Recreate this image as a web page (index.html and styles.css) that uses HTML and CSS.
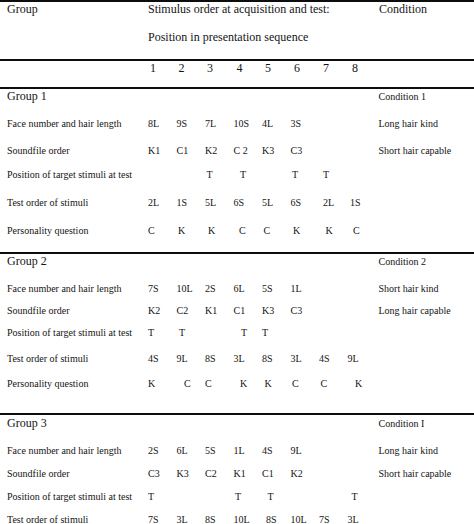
FILE: index.html
```html
<!DOCTYPE html>
<html lang="en">
<head>
<meta charset="utf-8">
<title>Stimulus order table</title>
<link rel="stylesheet" href="styles.css">
</head>
<body>
<div class="table">
  <div class="head">
    <div class="row head-top">
      <span class="lab">Group</span>
      <span class="span8">Stimulus order at acquisition and test:</span>
      <span class="cond">Condition</span>
    </div>
    <div class="row head-sub">
      <span class="span8">Position in presentation sequence</span>
    </div>
  </div>

  <div class="row numrow">
    <span class="c1">1</span><span class="c2">2</span><span class="c3">3</span><span class="c4">4</span><span class="c5">5</span><span class="c6">6</span><span class="c7">7</span><span class="c8">8</span>
  </div>

  <section class="group g1">
    <div class="row grow"><span class="lab">Group 1</span><span class="cond">Condition 1</span></div>
    <div class="row face"><span class="lab">Face number and hair length</span><span>8L</span><span>9S</span><span>7L</span><span>10S</span><span>4L</span><span>3S</span><span></span><span></span><span class="cond">Long hair kind</span></div>
    <div class="row sound"><span class="lab">Soundfile order</span><span>K1</span><span>C1</span><span>K2</span><span>C 2</span><span>K3</span><span>C3</span><span></span><span></span><span class="cond">Short hair capable</span></div>
    <div class="row pos"><span class="lab">Position of target stimuli at test</span><span></span><span></span><span class="n1">T</span><span class="n6">T</span><span></span><span class="n1">T</span><span class="n4">T</span><span></span></div>
    <div class="row test"><span class="lab">Test order of stimuli</span><span>2L</span><span>1S</span><span>5L</span><span>6S</span><span>5L</span><span>6S</span><span class="n4">2L</span><span class="n2">1S</span></div>
    <div class="row pers"><span class="lab">Personality question</span><span>C</span><span class="n1">K</span><span class="n3">K</span><span class="n5">C</span><span class="n1">C</span><span class="n2">K</span><span class="n6">K</span><span class="n5">C</span></div>
  </section>

  <section class="group g2">
    <div class="row grow"><span class="lab">Group 2</span><span class="cond">Condition 2</span></div>
    <div class="row face"><span class="lab">Face number and hair length</span><span>7S</span><span>10L</span><span>2S</span><span>6L</span><span>5S</span><span>1L</span><span></span><span></span><span class="cond">Short hair kind</span></div>
    <div class="row sound"><span class="lab">Soundfile order</span><span>K2</span><span>C2</span><span>K1</span><span>C1</span><span>K3</span><span>C3</span><span></span><span></span><span class="cond">Long hair capable</span></div>
    <div class="row pos"><span class="lab">Position of target stimuli at test</span><span>T</span><span class="n2">T</span><span></span><span class="n7">T</span><span>T</span><span></span><span></span><span></span></div>
    <div class="row test"><span class="lab">Test order of stimuli</span><span>4S</span><span>9L</span><span>8S</span><span>3L</span><span>8S</span><span>3L</span><span>4S</span><span>9L</span></div>
    <div class="row pers"><span class="lab">Personality question</span><span>K</span><span class="n7">C</span><span>C</span><span class="n6">K</span><span class="n2">K</span><span class="n1">C</span><span class="n1">C</span><span class="n7">K</span></div>
  </section>

  <section class="group g3">
    <div class="row grow"><span class="lab">Group 3</span><span class="cond">Condition I</span></div>
    <div class="row face"><span class="lab">Face number and hair length</span><span>2S</span><span>6L</span><span>5S</span><span>1L</span><span>4S</span><span>9L</span><span></span><span></span><span class="cond">Long hair kind</span></div>
    <div class="row sound"><span class="lab">Soundfile order</span><span>C3</span><span>K3</span><span>C2</span><span>K1</span><span>C1</span><span>K2</span><span></span><span></span><span class="cond">Short hair capable</span></div>
    <div class="row pos"><span class="lab">Position of target stimuli at test</span><span>T</span><span></span><span></span><span class="n1">T</span><span class="n5">T</span><span></span><span></span><span class="n4">T</span></div>
    <div class="row test"><span class="lab">Test order of stimuli</span><span>7S</span><span>3L</span><span>8S</span><span>10L</span><span class="n4">8S</span><span>10L</span><span>7S</span><span>3L</span></div>
  </section>
</div>
</body>
</html>
```

FILE: styles.css
```css
html, body {
  margin: 0;
  padding: 0;
  background: #ffffff;
}

body {
  font-family: "Liberation Serif", "Times New Roman", serif;
  color: #141414;
  width: 474px;
  height: 524px;
  overflow: hidden;
}

.table {
  border-top: 2px solid #0d0d0d;
}

.row {
  display: grid;
  grid-template-columns: 141px repeat(8, 28.5px) 1fr;
  padding-left: 7px;
  font-size: 10px;
  line-height: 12px;
  white-space: nowrap;
}

.row > span {
  display: block;
}

.lab {
  grid-column: 1;
}

.span8 {
  grid-column: 2 / 10;
}

.cond {
  grid-column: 10;
  padding-left: 2.5px;
}

/* header */
.head {
  border-bottom: 2px solid #0d0d0d;
}

.head-top,
.head-sub,
.numrow,
.grow {
  font-size: 12px;
  line-height: 14px;
}

.head-top {
  height: 28px;
}

.head-sub {
  height: 29px;
}

.head-top .cond {
  padding-left: 3px;
}

.numrow {
  height: 26px;
  border-bottom: 2px solid #0d0d0d;
}

.numrow > span {
  padding-left: 2px;
}

.numrow .c1 { grid-column: 2; }
.numrow .c2 { grid-column: 3; }
.numrow .c3 { grid-column: 4; }
.numrow .c4 { grid-column: 5; padding-left: 3px; }
.numrow .c5 { grid-column: 6; padding-left: 3px; }
.numrow .c6 { grid-column: 7; padding-left: 3.5px; }
.numrow .c7 { grid-column: 8; padding-left: 4px; }
.numrow .c8 { grid-column: 9; padding-left: 4.5px; }

/* group rows */
.grow {
  align-items: baseline;
}

.grow .cond {
  font-size: 10px;
}

.group {
  border-bottom: 2px solid #0d0d0d;
}

/* small nudges of single letters inside their column */
.n1 { padding-left: 1.5px; }
.n2 { padding-left: 2.5px; }
.n3 { padding-left: 3px; }
.n4 { padding-left: 4px; }
.n5 { padding-left: 5.5px; }
.n6 { padding-left: 6.5px; }
.n7 { padding-left: 7.5px; }

/* group 1 row heights */
.g1 .grow  { height: 29px; }
.g1 .face  { height: 27px; }
.g1 .sound { height: 24px; }
.g1 .pos   { height: 28px; }
.g1 .test  { height: 28px; }
.g1 .pers  { height: 27px; }

/* group 2 row heights */
.g2 .grow  { height: 29px; }
.g2 .face  { height: 22px; }
.g2 .sound { height: 22px; }
.g2 .pos   { height: 26px; }
.g2 .test  { height: 25px; }
.g2 .pers  { height: 35px; }

/* group 3 row heights */
.g3 .grow  { height: 29px; padding-top: 1px; }
.g3 .face  { height: 23px; }
.g3 .sound { height: 23px; }
.g3 .pos   { height: 23px; }
.g3 .test  { height: 20px; }
```
